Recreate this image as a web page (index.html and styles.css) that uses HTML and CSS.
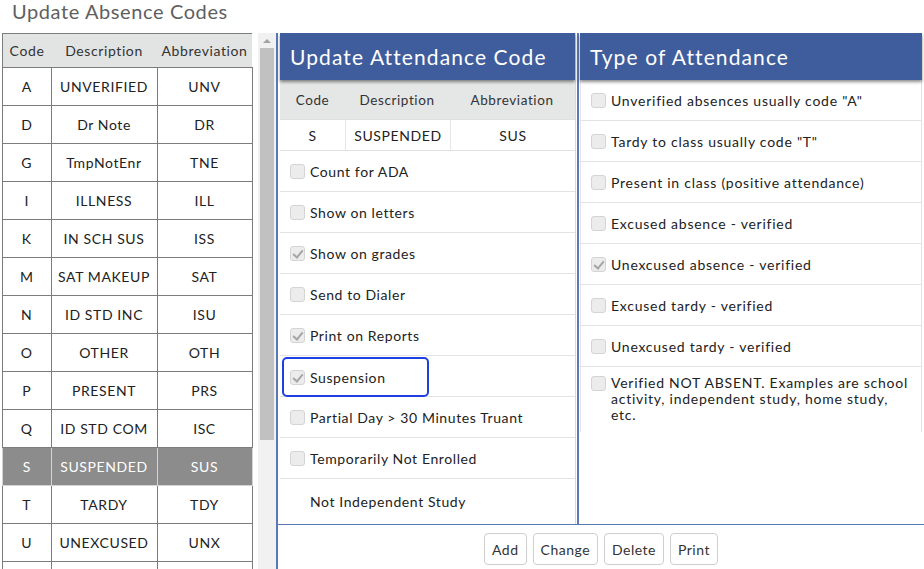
FILE: index.html
```html
<!DOCTYPE html>
<html>
<head>
<meta charset="utf-8">
<link rel="stylesheet" href="styles.css">
</head>
<body>
<div class="title">Update Absence Codes</div>
<div class="main">
  <div class="list">
    <table class="codes">
      <thead>
        <tr><th class="c1">Code</th><th class="c2">Description</th><th class="c3">Abbreviation</th></tr>
      </thead>
      <tbody>
        <tr><td>A</td><td>UNVERIFIED</td><td>UNV</td></tr>
        <tr><td>D</td><td>Dr Note</td><td>DR</td></tr>
        <tr><td>G</td><td>TmpNotEnr</td><td>TNE</td></tr>
        <tr><td>I</td><td>ILLNESS</td><td>ILL</td></tr>
        <tr><td>K</td><td>IN SCH SUS</td><td>ISS</td></tr>
        <tr><td>M</td><td>SAT MAKEUP</td><td>SAT</td></tr>
        <tr><td>N</td><td>ID STD INC</td><td>ISU</td></tr>
        <tr><td>O</td><td>OTHER</td><td>OTH</td></tr>
        <tr><td>P</td><td>PRESENT</td><td>PRS</td></tr>
        <tr><td>Q</td><td>ID STD COM</td><td>ISC</td></tr>
        <tr class="sel"><td>S</td><td>SUSPENDED</td><td>SUS</td></tr>
        <tr><td>T</td><td>TARDY</td><td>TDY</td></tr>
        <tr><td>U</td><td>UNEXCUSED</td><td>UNX</td></tr>
        <tr><td></td><td></td><td></td></tr>
      </tbody>
    </table>
  </div>
  <div class="scrollbar">
    <div class="arrow"></div>
    <div class="thumb"></div>
  </div>
  <div class="editor">
    <div class="panels">
      <div class="panel mid">
        <div class="phead">Update Attendance Code</div>
        <div class="subhead">
          <div class="s1">Code</div><div class="s2">Description</div><div class="s3">Abbreviation</div>
        </div>
        <div class="subrow">
          <div class="s1">S</div><div class="s2">SUSPENDED</div><div class="s3">SUS</div>
        </div>
        <div class="row"><span class="cb"></span>Count for ADA</div>
        <div class="row"><span class="cb"></span>Show on letters</div>
        <div class="row"><span class="cb on"></span>Show on grades</div>
        <div class="row"><span class="cb"></span>Send to Dialer</div>
        <div class="row"><span class="cb on"></span>Print on Reports</div>
        <div class="row"><span class="focus"><span class="cb on"></span>Suspension</span></div>
        <div class="row"><span class="cb"></span>Partial Day &gt; 30 Minutes Truant</div>
        <div class="row"><span class="cb"></span>Temporarily Not Enrolled</div>
        <div class="row last"><span class="cbspace"></span>Not Independent Study</div>
      </div>
      <div class="sep"></div>
      <div class="panel right">
        <div class="phead">Type of Attendance</div>
        <div class="rrows">
          <div class="row"><span class="cb"></span>Unverified absences usually code "A"</div>
          <div class="row"><span class="cb"></span>Tardy to class usually code "T"</div>
          <div class="row"><span class="cb"></span>Present in class (positive attendance)</div>
          <div class="row"><span class="cb"></span>Excused absence - verified</div>
          <div class="row"><span class="cb on"></span>Unexcused absence - verified</div>
          <div class="row"><span class="cb"></span>Excused tardy - verified</div>
          <div class="row"><span class="cb"></span>Unexcused tardy - verified</div>
          <div class="row multi"><span class="cb"></span><span class="txt">Verified NOT ABSENT. Examples are school<br>activity, independent study, home study,<br>etc.</span></div>
        </div>
      </div>
    </div>
    <div class="buttons">
      <button class="btn">Add</button>
      <button class="btn">Change</button>
      <button class="btn">Delete</button>
      <button class="btn">Print</button>
    </div>
  </div>
</div>
</body>
</html>
```
FILE: styles.css
```css
html, body {
  margin: 0;
  padding: 0;
  background: #fff;
  font-family: Lato, "Open Sans", sans-serif;
  color: #222;
  overflow: hidden;
}
.title {
  height: 33px;
  padding-left: 12px;
  font-size: 20px;
  line-height: 22px;
  color: #5f5f5f;
  letter-spacing: 0.6px;
}
.main {
  display: flex;
  height: 536px;
  overflow: hidden;
}
.list {
  width: 256px;
  padding-left: 2px;
  box-sizing: border-box;
  flex: none;
}
.codes {
  border-collapse: collapse;
  font-size: 14px;
  letter-spacing: 0.6px;
}
.codes th {
  background: #e2e3e3;
  font-weight: normal;
  height: 33px;
  padding: 0;
  color: #333;
  border-top: 1px solid #7c7c7c;
}
.codes th.c1 { width: 48px; border-left: 1px solid #7c7c7c; }
.codes th.c2 { width: 106px; }
.codes th.c3 { width: 95px; }
.codes td {
  height: 37px;
  padding: 0;
  text-align: center;
  border: 1px solid #7c7c7c;
}
.codes tr.sel td {
  background: #8c8c8c;
  color: #fff;
  border-color: #d4d4d4;
}
.scrollbar {
  width: 18px;
  flex: none;
  background: #f1f1f1;
  margin-left: 2px;
}
.arrow {
  width: 0;
  height: 0;
  margin: 6px auto 0;
  border-left: 4px solid transparent;
  border-right: 4px solid transparent;
  border-bottom: 4px solid #a3a3a3;
}
.thumb {
  margin: 5px 2px 0 2px;
  height: 392px;
  background: #c1c1c1;
}
.editor {
  flex: 1;
  display: flex;
  flex-direction: column;
  border-left: 2px solid #5a78b4;
}
.panels {
  display: flex;
  height: 491px;
  border-bottom: 1px solid #5a78b4;
  padding-left: 2px;
}
.panel {
  display: flex;
  flex-direction: column;
  font-size: 14px;
  letter-spacing: 0.6px;
}
.mid {
  width: 296px;
  border-right: 1px solid #d9d9d9;
  box-sizing: border-box;
}
.sep {
  width: 2px;
  margin: 0 1px 0 1px;
  background: #5a78b4;
}
.right {
  width: 342px;
  letter-spacing: 0.75px;
}
.phead {
  height: 47px;
  flex: none;
  background: #3f5d9c;
  color: #fff;
  font-size: 21px;
  line-height: 47px;
  padding-left: 10px;
  letter-spacing: 1.1px;
  box-shadow: 0 2px 3px rgba(0,0,0,0.45);
  position: relative;
  z-index: 1;
}
.subhead, .subrow {
  display: flex;
  flex: none;
}
.subhead {
  height: 39px;
  background: #e5e6e6;
  align-items: center;
  color: #333;
  font-size: 13.5px;
}
.subhead div, .subrow div {
  text-align: center;
}
.s1 { width: 65px; }
.s2 { width: 104px; }
.s3 { flex: 1; }
.subrow {
  height: 32px;
  border-top: 1px solid #e0e0e0;
  border-bottom: 1px solid #e0e0e0;
  box-sizing: border-box;
}
.subrow div {
  line-height: 31px;
}
.subrow .s2 {
  border-left: 1px solid #e6e6e6;
  border-right: 1px solid #e6e6e6;
}
.row {
  height: 41px;
  flex: none;
  display: flex;
  align-items: center;
  padding-left: 10px;
  border-bottom: 1px solid #e3e3e3;
  box-sizing: border-box;
}
.mid .row.last {
  flex: 1;
  border-bottom: none;
}
.cb, .cbspace {
  width: 15px;
  height: 15px;
  flex: none;
  margin-right: 5px;
  box-sizing: border-box;
}
.cb {
  background: #ececec;
  border: 1px solid #d4d4d4;
  border-radius: 3px;
  position: relative;
}
.cb.on::after {
  content: "";
  position: absolute;
  left: 4px;
  top: 1px;
  width: 4px;
  height: 8px;
  border-right: 2.5px solid #a6a6a6;
  border-bottom: 2.5px solid #a6a6a6;
  transform: rotate(40deg);
}
.focus {
  display: flex;
  align-items: center;
  margin-left: -8px;
  padding-left: 6px;
  width: 147px;
  height: 40px;
  margin-top: 2px;
  border: 2px solid #1f3fe0;
  border-radius: 5px;
  box-sizing: border-box;
}
.rrows {
  border-left: 1px solid #e3e3e3;
  border-right: 1px solid #e3e3e3;
}
.right .row.multi {
  height: 65px;
  align-items: flex-start;
  padding-top: 8px;
  border-bottom: none;
}
.right .row.multi .cb {
  margin-top: 1px;
}
.txt {
  line-height: 16px;
  white-space: nowrap;
}
.buttons {
  display: flex;
  justify-content: center;
  gap: 6px;
  padding-top: 8px;
}
.btn {
  height: 32px;
  padding: 0 7px;
  background: #fff;
  border: 1px solid #cfcfcf;
  border-radius: 4px;
  font-family: Lato, "Open Sans", sans-serif;
  font-size: 14px;
  letter-spacing: 0.5px;
  color: #333;
}
```
